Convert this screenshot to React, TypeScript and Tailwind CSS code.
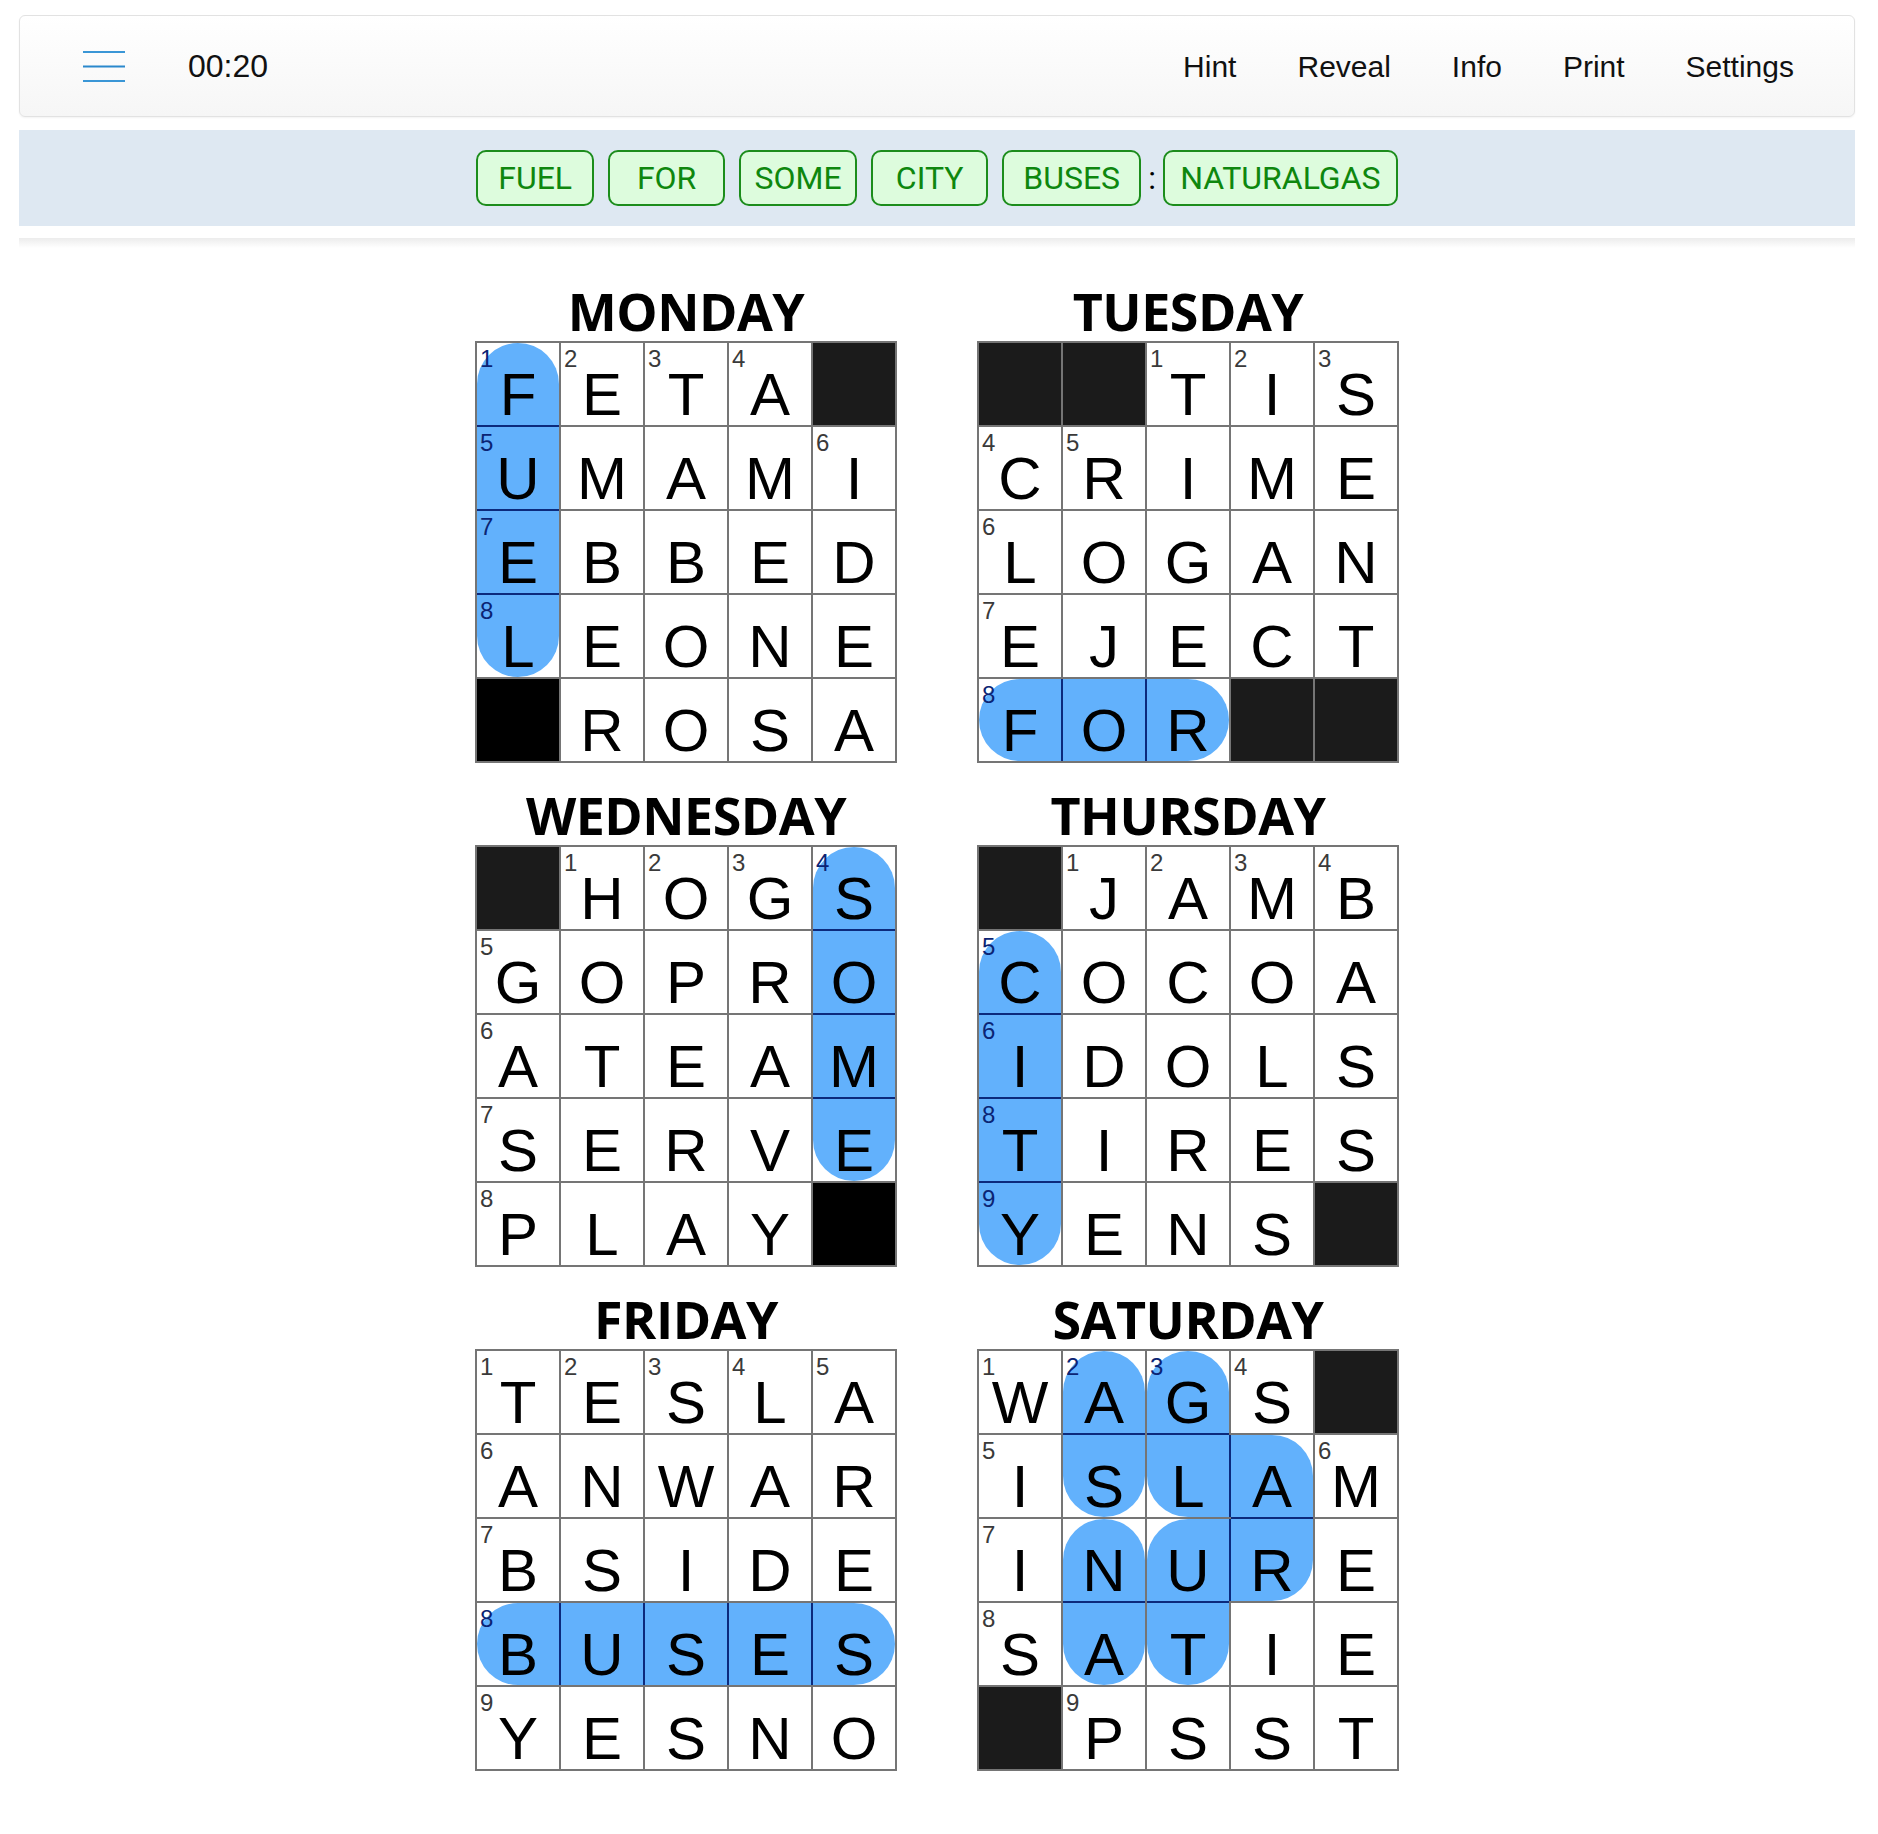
import React from 'react';
import clsx from 'clsx';

type Pos = [number, number];

interface Puzzle {
    day: string;
    rows: string[]; // '#' = dark block, '@' = pure black block
    nums: Record<string, number>;
    paths: Pos[][]; // highlighted answer pieces, in order
}

const PUZZLES: Puzzle[] = [
    {
        day: 'MONDAY',
        rows: ['FETA#', 'UMAMI', 'EBBED', 'LEONE', '@ROSA'],
        nums: { '0,0': 1, '0,1': 2, '0,2': 3, '0,3': 4, '1,0': 5, '1,4': 6, '2,0': 7, '3,0': 8 },
        paths: [[[0, 0], [1, 0], [2, 0], [3, 0]]],
    },
    {
        day: 'TUESDAY',
        rows: ['##TIS', 'CRIME', 'LOGAN', 'EJECT', 'FOR##'],
        nums: { '0,2': 1, '0,3': 2, '0,4': 3, '1,0': 4, '1,1': 5, '2,0': 6, '3,0': 7, '4,0': 8 },
        paths: [[[4, 0], [4, 1], [4, 2]]],
    },
    {
        day: 'WEDNESDAY',
        rows: ['#HOGS', 'GOPRO', 'ATEAM', 'SERVE', 'PLAY@'],
        nums: { '0,1': 1, '0,2': 2, '0,3': 3, '0,4': 4, '1,0': 5, '2,0': 6, '3,0': 7, '4,0': 8 },
        paths: [[[0, 4], [1, 4], [2, 4], [3, 4]]],
    },
    {
        day: 'THURSDAY',
        rows: ['#JAMB', 'COCOA', 'IDOLS', 'TIRES', 'YENS#'],
        nums: { '0,1': 1, '0,2': 2, '0,3': 3, '0,4': 4, '1,0': 5, '2,0': 6, '3,0': 8, '4,0': 9 },
        paths: [[[1, 0], [2, 0], [3, 0], [4, 0]]],
    },
    {
        day: 'FRIDAY',
        rows: ['TESLA', 'ANWAR', 'BSIDE', 'BUSES', 'YESNO'],
        nums: { '0,0': 1, '0,1': 2, '0,2': 3, '0,3': 4, '0,4': 5, '1,0': 6, '2,0': 7, '3,0': 8, '4,0': 9 },
        paths: [[[3, 0], [3, 1], [3, 2], [3, 3], [3, 4]]],
    },
    {
        day: 'SATURDAY',
        rows: ['WAGS#', 'ISLAM', 'INURE', 'SATIE', '#PSST'],
        nums: { '0,0': 1, '0,1': 2, '0,2': 3, '0,3': 4, '1,0': 5, '1,4': 6, '2,0': 7, '3,0': 8, '4,1': 9 },
        paths: [
            [[2, 1], [3, 1]],
            [[3, 2], [2, 2], [2, 3], [1, 3], [1, 2], [0, 2]],
            [[0, 1], [1, 1]],
        ],
    },
];

const CHIPS = [
    { word: 'FUEL', w: 'w-[118px]' },
    { word: 'FOR', w: 'w-[117px]' },
    { word: 'SOME', w: 'w-[118px]' },
    { word: 'CITY', w: 'w-[117px]' },
    { word: 'BUSES', w: 'w-[139px]' },
];

const MENU = ['Hint', 'Reveal', 'Info', 'Print', 'Settings'];

// which sides of each highlighted cell join the next cell of its answer
const buildLinks = (paths: Pos[][]) => {
    const links: Record<string, Set<string>> = {};
    const add = (p: Pos, side: string) => {
        const k = `${p[0]},${p[1]}`;
        if (!links[k]) links[k] = new Set();
        if (side) links[k].add(side);
    };
    for (const path of paths) {
        path.forEach((p, i) => {
            add(p, '');
            const n = path[i + 1];
            if (!n) return;
            if (n[0] === p[0] + 1) { add(p, 'd'); add(n, 'u'); }
            if (n[0] === p[0] - 1) { add(p, 'u'); add(n, 'd'); }
            if (n[1] === p[1] + 1) { add(p, 'r'); add(n, 'l'); }
            if (n[1] === p[1] - 1) { add(p, 'l'); add(n, 'r'); }
        });
    }
    return links;
};

const GridCell: React.FC<{ ch: string; num?: number; links?: Set<string> }> = ({ ch, num, links }) => {
    if (ch === '#') return <div className="h-[82px] w-[82px] bg-[#1b1b1b]" />;
    if (ch === '@') return <div className="h-[82px] w-[82px] bg-black" />;

    const lit = !!links;
    const u = links?.has('u');
    const d = links?.has('d');
    const l = links?.has('l');
    const r = links?.has('r');

    return (
        <div className="relative h-[82px] w-[82px] bg-white">
            {lit && (
                <div
                    className={clsx(
                        'absolute inset-0 bg-[#62b1fc]',
                        !u && !l && 'rounded-tl-[41px]',
                        !u && !r && 'rounded-tr-[41px]',
                        !d && !l && 'rounded-bl-[41px]',
                        !d && !r && 'rounded-br-[41px]'
                    )}
                />
            )}
            {d && <div className="absolute -bottom-[2px] left-0 right-0 h-[2px] bg-[#0c2a7c]" />}
            {r && <div className="absolute -right-[2px] top-0 bottom-0 w-[2px] bg-[#0c2a7c]" />}
            {num !== undefined && (
                <span
                    className={clsx(
                        'absolute left-[3px] top-[4px] text-[24px] leading-none',
                        lit ? 'text-[#0b2474]' : 'text-[#3a3a3a]'
                    )}
                >
                    {num}
                </span>
            )}
            <div className="relative pt-[22px] text-center text-[60px] leading-none text-black">{ch}</div>
        </div>
    );
};

const PuzzleBlock: React.FC<{ puzzle: Puzzle }> = ({ puzzle }) => {
    const links = buildLinks(puzzle.paths);
    return (
        <div>
            <div
                className="flex h-[82px] items-end justify-center pb-[4px] text-[52px] font-bold leading-none tracking-[-0.5px] text-black"
                style={{ fontFamily: "'Open Sans', 'Liberation Sans', sans-serif" }}
            >
                {puzzle.day}
            </div>
            <div className="grid grid-cols-[repeat(5,82px)] gap-[2px] bg-[#757575] p-[2px]">
                {puzzle.rows.map((row, ri) =>
                    row.split('').map((ch, ci) => {
                        const k = `${ri},${ci}`;
                        return <GridCell key={k} ch={ch} num={puzzle.nums[k]} links={links[k]} />;
                    })
                )}
            </div>
        </div>
    );
};

const App: React.FC = () => {
    return (
        <div
            className="min-h-screen bg-white pl-[19px] pr-[23px] pt-[15px] pb-[60px]"
            style={{ fontFamily: "'Liberation Sans', Arial, sans-serif" }}
        >
            {/* Top bar */}
            <header className="flex h-[102px] items-center rounded-[6px] border border-[#e2e2e2] bg-linear-to-b from-white to-[#f6f6f6] shadow-[0_1px_2px_rgba(0,0,0,0.05)]">
                <svg className="ml-[63px]" width="42" height="31" viewBox="0 0 42 31">
                    <line x1="0" y1="1" x2="42" y2="1" stroke="#3a96d6" strokeWidth="2" />
                    <line x1="0" y1="15.5" x2="42" y2="15.5" stroke="#2a88cc" strokeWidth="2" />
                    <line x1="0" y1="30" x2="42" y2="30" stroke="#3a96d6" strokeWidth="2" />
                </svg>
                <span className="ml-[63px] text-[32px] text-[#111111]">00:20</span>
                <nav className="ml-auto mr-[60px] flex gap-[61px] text-[30px] text-[#111111]">
                    {MENU.map(item => (
                        <span key={item}>{item}</span>
                    ))}
                </nav>
            </header>

            {/* Answer banner */}
            <div
                className="mt-[13px] flex h-[96px] items-center justify-center gap-[14px] bg-[#dee8f2] text-[32px]"
                style={{ fontFamily: "'Liberation Sans Narrow', 'Roboto', sans-serif" }}
            >
                {CHIPS.map(c => (
                    <div
                        key={c.word}
                        className={clsx(
                            'flex h-[56px] items-center justify-center rounded-[10px] border-2 border-[#1c8d1c] bg-[#ddfcdd] leading-none text-[#0e870e]',
                            c.w
                        )}
                    >
                        {c.word}
                    </div>
                ))}
                <span className="-mx-[7px] leading-none text-black">:</span>
                <div className="flex h-[56px] w-[235px] items-center justify-center rounded-[10px] border-2 border-[#1c8d1c] bg-[#ddfcdd] leading-none text-[#0e870e]">
                    NATURALGAS
                </div>
            </div>
            <div className="mt-[12px] h-[10px] bg-linear-to-b from-[#ececec] to-white" />

            {/* Puzzles */}
            <main className="mt-[11px] flex justify-center">
                <div className="grid grid-cols-[422px_422px] gap-x-[80px]">
                    {PUZZLES.map(p => (
                        <PuzzleBlock key={p.day} puzzle={p} />
                    ))}
                </div>
            </main>
        </div>
    );
};

export default App;
